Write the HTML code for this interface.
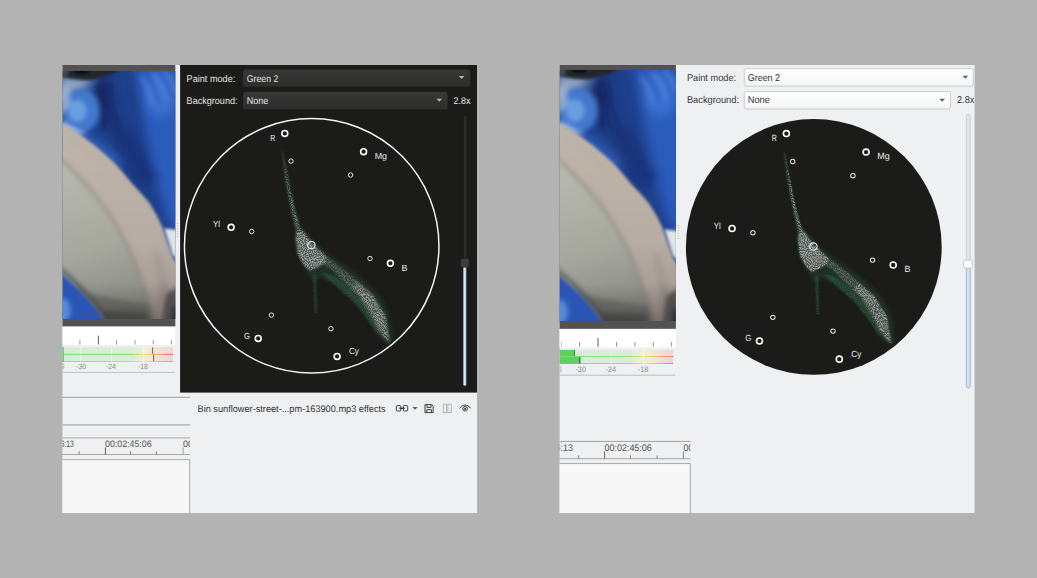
<!DOCTYPE html>
<html lang="en">
<head>
<meta charset="utf-8">
<title>Vectorscope comparison</title>
<style>
html,body{margin:0;padding:0;background:#b3b3b3;}
body{width:1037px;height:578px;overflow:hidden;}
svg{display:block;}
text{font-family:"Liberation Sans","DejaVu Sans",sans-serif;text-rendering:geometricPrecision;}
</style>
</head>
<body>
<svg width="1037" height="578" viewBox="0 0 1037 578">
<defs>
  <filter id="vblur" x="-10%" y="-10%" width="120%" height="120%"><feGaussianBlur stdDeviation="1.6"/></filter>
  <filter id="vblur3" x="-20%" y="-20%" width="140%" height="140%"><feGaussianBlur stdDeviation="2.4"/></filter>
  <filter id="vblur2" x="-40%" y="-40%" width="180%" height="180%"><feGaussianBlur stdDeviation="5"/></filter>
  <filter id="tblur" x="-20%" y="-20%" width="140%" height="140%"><feGaussianBlur stdDeviation="0.9"/></filter>
  <filter id="tblur2" x="-20%" y="-20%" width="140%" height="140%"><feGaussianBlur stdDeviation="2"/></filter>
  <filter id="tblur4" x="-20%" y="-20%" width="140%" height="140%"><feGaussianBlur stdDeviation="0.55"/></filter>
  <filter id="speck" x="-20%" y="-20%" width="140%" height="140%" color-interpolation-filters="sRGB">
    <feGaussianBlur in="SourceGraphic" stdDeviation="0.8" result="b"/>
    <feTurbulence type="fractalNoise" baseFrequency="0.95" numOctaves="1" seed="7" result="n"/>
    <feColorMatrix in="n" type="matrix" values="0 0 0 0 1  0 0 0 0 1  0 0 0 0 1  5 0 0 0 -2.05" result="m"/>
    <feComposite in="b" in2="m" operator="in"/>
  </filter>
  <filter id="soft" x="-5%" y="-5%" width="110%" height="110%"><feGaussianBlur stdDeviation="0.35"/></filter>

  <linearGradient id="gGlove" x1="0" y1="0" x2="1" y2="1">
    <stop offset="0" stop-color="#3d74cf"/>
    <stop offset="0.45" stop-color="#2a57b6"/>
    <stop offset="1" stop-color="#1f47a6"/>
  </linearGradient>
  <linearGradient id="gRim" x1="0" y1="0" x2="1" y2="0">
    <stop offset="0" stop-color="#a7a79b"/>
    <stop offset="0.45" stop-color="#b1ada3"/>
    <stop offset="1" stop-color="#bdb5ad"/>
  </linearGradient>
  <radialGradient id="gFinger" cx="0.45" cy="0.5" r="0.6">
    <stop offset="0" stop-color="#6ea4ea"/>
    <stop offset="0.5" stop-color="#4a82d8"/>
    <stop offset="1" stop-color="#346ac8"/>
  </radialGradient>
  <linearGradient id="gMeter" x1="0" y1="0" x2="1" y2="0">
    <stop offset="0" stop-color="#5fd35f"/>
    <stop offset="0.62" stop-color="#6fdc5f"/>
    <stop offset="0.74" stop-color="#f0ea50"/>
    <stop offset="0.84" stop-color="#f5b04a"/>
    <stop offset="1" stop-color="#f04848"/>
  </linearGradient>
  <linearGradient id="gShade" x1="0" y1="0" x2="0" y2="1"><stop offset="0" stop-color="#000" stop-opacity="0"/><stop offset="1" stop-color="#000" stop-opacity="0.28"/></linearGradient>
  <linearGradient id="gInner" gradientUnits="userSpaceOnUse" x1="0" y1="90" x2="50" y2="254"><stop offset="0" stop-color="#b9bbaf"/><stop offset="0.55" stop-color="#a6a89e"/><stop offset="1" stop-color="#85877f"/></linearGradient>
  <linearGradient id="gRim2" gradientUnits="userSpaceOnUse" x1="0" y1="50" x2="0" y2="254"><stop offset="0" stop-color="#bfb5a9"/><stop offset="0.6" stop-color="#b7aca4"/><stop offset="1" stop-color="#9c938d"/></linearGradient>
  <linearGradient id="gComboD" x1="0" y1="0" x2="0" y2="1"><stop offset="0" stop-color="#373736"/><stop offset="1" stop-color="#2d2d2c"/></linearGradient>
  <linearGradient id="gComboL" x1="0" y1="0" x2="0" y2="1"><stop offset="0" stop-color="#ffffff"/><stop offset="1" stop-color="#f4f5f6"/></linearGradient>
  <linearGradient id="gSlideL" x1="0" y1="0" x2="0" y2="1">
    <stop offset="0" stop-color="#9ab4cc"/>
    <stop offset="1" stop-color="#d6e6f6"/>
  </linearGradient>

  <clipPath id="clipShotL"><rect x="62.5" y="65" width="414.5" height="448"/></clipPath>
  <clipPath id="clipShotR"><rect x="559.6" y="65" width="415" height="448"/></clipPath>
  <clipPath id="clipL"><rect x="62.5" y="420" width="127.5" height="60"/></clipPath>
  <clipPath id="clipR"><rect x="559.6" y="420" width="130.9" height="60"/></clipPath>
  <pattern id="hatch" width="2" height="2" patternUnits="userSpaceOnUse">
    <rect width="2" height="2" fill="#5a5f5c"/>
    <rect width="1" height="1" fill="#e8e8e8"/>
    <rect x="1" y="1" width="1" height="1" fill="#cfcfcf"/>
  </pattern>

  <!-- video frame: local coords 0..113 x 0..249 -->
  <symbol id="video" viewBox="0 0 113 249" preserveAspectRatio="none">
    <rect x="0" y="0" width="113" height="249" fill="#1e408c"/>
    <g filter="url(#vblur2)">
      <path d="M72 -6 L120 -6 L120 170 L106 150 L94 110 L84 64 Z" fill="#2b5cbc"/>
      <ellipse cx="98" cy="24" rx="16" ry="22" fill="#3f76d4" opacity="0.8"/>
      <path d="M60 62 C66 76 72 86 79 98 C82 104 85 109 88 114" stroke="#19327a" stroke-width="23" fill="none" opacity="0.88"/>
      <path d="M44 6 C44 30 48 46 58 64" stroke="#172e70" stroke-width="13" fill="none" opacity="0.9"/>
      <ellipse cx="40" cy="24" rx="9" ry="17" fill="#152a68"/>
      <path d="M6 60 C24 66 40 78 56 96" stroke="#3566c4" stroke-width="9" fill="none" opacity="0.9"/>
      <path d="M-4 4 L30 6 L24 18 L10 24 L-4 40 Z" fill="#8fa4be"/>
    </g>
    <g filter="url(#vblur3)">
      <ellipse cx="18" cy="40" rx="19" ry="22" fill="#4278cc"/>
      <ellipse cx="15" cy="40" rx="9" ry="11" fill="#6a9ee2"/>
      <path d="M-2 20 L6 12 L8 34 L-2 44 Z" fill="#9fb6d4" opacity="0.8"/>
      <path d="M39 14 C38 30 39 44 43 58" stroke="#14265e" stroke-width="6" fill="none" opacity="0.85"/>
      <path d="M78 6 C84 12 88 22 90 34 M90 2 C98 10 102 20 104 30 M102 0 C108 6 112 14 114 22" stroke="#5a90e6" stroke-width="3" opacity="0.6" fill="none"/>
      <path d="M84 4 C90 12 94 22 96 32 M96 0 C103 8 107 16 109 26" stroke="#2450b2" stroke-width="2.5" opacity="0.6" fill="none"/>
      <path d="M-2 50 L8 55 L24 64 L12 64 L-2 58 Z" fill="#9cc0ee" opacity="0.9"/>
    </g>
    <g filter="url(#vblur)">
      <!-- whole dish -->
      <path d="M-4 50.5 L7 57 L20 65.5 L33 75.4 L43 84 L52.3 92.6 L61 102.5 L69.6 113 L79 123 L86.9 132.4 L94 144 L99.9 156.2 L104.2 169 L110 186 L117 196 L117 254 L-4 254 Z" fill="url(#gRim2)"/>
    </g>
    <g filter="url(#vblur3)">
      <!-- inner surface -->
      <path d="M-4 86 C8 96 18 108 26 116 C37 128 50 146 62 169 C72 186 82 214 93 254 L-4 254 Z" fill="url(#gInner)"/>
      <path d="M-4 87 C8 97 18 109 26 117 C37 129 50 147 62 170 C72 187 82 215 92 254" stroke="#8a827d" stroke-width="2.5" fill="none" opacity="0.8"/>
      <path d="M10 210 L30 224 L60 230 L86 234 L90 254 L30 254 Z" fill="#6c6d69" opacity="0.75"/>
      <path d="M42 240 L84 242 L88 256 L40 256 Z" fill="#575755" opacity="0.85"/>
      <path d="M-4 198 C10 208 28 226 46 252" stroke="#4a4e55" stroke-width="5" fill="none" opacity="0.75"/>
      <g filter="url(#vblur3)"><path d="M94 186 C101 208 106 235 108 254" stroke="#8d8681" stroke-width="8" stroke-linecap="round" fill="none" opacity="0.4"/>
      <path d="M101 218 C104 230 107 242 108 254" stroke="#857e79" stroke-width="8" stroke-linecap="round" fill="none" opacity="0.45"/></g>
      <path d="M6 66 C26 78 50 100 68 124" stroke="#b9b0a6" stroke-width="6" fill="none" opacity="0.8"/>
    </g>
    <g filter="url(#vblur)">
      <path d="M102 158 L116 160 L116 190 L110 184 Z" fill="#dfe4e4"/>
      <path d="M-4 202 C10 212 28 230 44 254 L-4 254 Z" fill="#2a55b4"/>
    </g>
    <g filter="url(#vblur3)">
      <path d="M18 212 L116 212 L116 254 L46 254 Z" fill="url(#gShade)"/>
      <path d="M104 224 L116 216 L116 254 L99 254 Z" fill="#4d4a48" opacity="0.95"/>
      <path d="M111 238 L116 234 L116 254 L109 254 Z" fill="#141c3a" opacity="0.9"/>
      <ellipse cx="1" cy="240" rx="7" ry="12" fill="#5a8edc" opacity="0.95"/>
    </g>
    <g filter="url(#vblur)">
      <path d="M-4 -4 L61 -4 C55 2 47 4.5 40 6 C33 8.5 27 9.5 20 9 C12 8.5 4 6.5 -4 5.5 Z" fill="#20262a"/>
      <path d="M-4 -2 L6 -2 L5 5 L-4 5 Z" fill="#4a5662" opacity="0.8"/>
      <ellipse cx="19" cy="0.5" rx="8" ry="2.5" fill="#050607"/>
    </g>
  </symbol>

  <!-- vectorscope trace in scope-local coords: centre (0,0), radius 127.6 -->
  <g id="trace">
    <g filter="url(#tblur2)" opacity="0.22">
      <path d="M-17 -12 L-8 -15 L4 -3 L18 10 L38 23 L56 38 L70 53 L79 72 L82 96 L77 100 L66 90 L58 76 L44 56 L24 40 L10 32 L0 36 L-8 22 L-15 6 Z" fill="#2b6846"/>
    </g>
    <g filter="url(#tblur)">
      <path d="M-29.8 -94 L-28.6 -94 L-21 -52 L-13 -20 L-6 -12 L-15 -10 L-20 -32 L-26 -62 Z" fill="#2f4a3b" opacity="0.6"/>
      <path d="M1.5 30 L4.5 30 L5.5 68 L3 68 Z" fill="#2c6443" opacity="0.3"/>
      <path d="M8 27 L22 31 L40 45 L54 62 L62 78 L69 91 L64 87 L54 72 L40 55 L22 39 Z" fill="#2f6b48" opacity="0.3"/>
      <path d="M14 11 L32.2 25 L45.7 36 L61.4 49.8 L73.8 70 L76 83.5 L78.5 98 L74 96 L64.8 83.5 L58 70 L45.7 49.8 L31 36 L21 25 L10 18 Z" fill="#4c5550" opacity="0.45"/>
      <path d="M46 37 L61 50.5 L73 70 L75.5 83.5 L77.5 95 L74 93 L66.5 83.5 L60.5 70 L49 52 L40 43 Z" fill="#5a605c" opacity="0.5"/>
      <path d="M-16 -7 L-15 -13 L-8.5 -13.5 L-3 -6 L1.5 -0.5 L8 5.5 L14.5 11.5 L13 18 L6 22.5 L-2 25.5 L-8.2 19.6 L-13.8 9.3 Z" fill="#555a57" opacity="0.85"/>
    </g>
    <g filter="url(#speck)">
      <path d="M-29.8 -94 L-28.6 -94 L-21 -52 L-13 -20 L-6 -12 L-15 -10 L-20 -32 L-26 -62 Z" fill="#587f69" opacity="0.45"/>
      <path d="M-27 -78 L-26 -78 L-17 -36 L-10 -14 L-14 -13 L-21 -40 Z" fill="#d0d6d2" opacity="0.45"/>
      <path d="M1.5 30 L4.5 30 L5.5 68 L3 68 Z" fill="#37704f" opacity="0.4"/>
      <path d="M8 27 L22 31 L40 45 L54 62 L62 78 L69 91 L64 87 L54 72 L40 55 L22 39 Z" fill="#37704f" opacity="0.33"/>
      <path d="M-17 -12 L-8 -15 L4 -3 L18 10 L38 23 L56 38 L70 53 L79 72 L82 96 L77 100 L66 90 L58 76 L44 56 L24 40 L10 32 L0 36 L-8 22 L-15 6 Z" fill="#2f6446" opacity="0.13"/>
      <path d="M14 11 L32.2 25 L45.7 36 L61.4 49.8 L73.8 70 L76 83.5 L78.5 98 L74 96 L64.8 83.5 L58 70 L45.7 49.8 L31 36 L21 25 L10 18 Z" fill="#d4d8d5" opacity="0.24"/>
      <path d="M46 37 L61 50.5 L73 70 L75.5 83.5 L77.5 95 L74 93 L66.5 83.5 L60.5 70 L49 52 L40 43 Z" fill="#e6e6e6" opacity="0.36"/>
      <path d="M-16 -7 L-15 -13 L-8.5 -13.5 L-3 -6 L1.5 -0.5 L8 5.5 L14.5 11.5 L13 18 L6 22.5 L-2 25.5 L-8.2 19.6 L-13.8 9.3 Z" fill="#ececec" opacity="0.52"/>
    </g>
    <circle cx="-0.3" cy="0.2" r="3.7" fill="none" stroke="#f2f2f2" stroke-width="1.05"/>
  </g>

  <!-- scope markers, local coords relative to centre -->
  <g id="marks" fill="none">
    <g stroke="#ffffff" stroke-width="1.6">
      <circle cx="-26.9" cy="-111.5" r="2.95"/>
      <circle cx="-80.6" cy="-17.6" r="2.95"/>
      <circle cx="51.9" cy="-93.2" r="2.95"/>
      <circle cx="78.7" cy="18.4" r="2.95"/>
      <circle cx="-53.5" cy="93.5" r="2.95"/>
      <circle cx="25.4" cy="111.5" r="2.95"/>
    </g>
    <g stroke="#e6e6e6" stroke-width="1">
      <circle cx="-20.7" cy="-83.8" r="2.2"/>
      <circle cx="-60" cy="-13.4" r="2.2"/>
      <circle cx="38.9" cy="-69.9" r="2.2"/>
      <circle cx="58.3" cy="13.6" r="2.2"/>
      <circle cx="-40.3" cy="70.2" r="2.2"/>
      <circle cx="19.2" cy="83.8" r="2.2"/>
    </g>
    <g fill="#ececec" stroke="none" font-size="8.9">
      <text x="-41.4" y="-104.3" textLength="5" lengthAdjust="spacingAndGlyphs">R</text>
      <text x="-98.6" y="-17.6" textLength="6.9" lengthAdjust="spacingAndGlyphs">Yl</text>
      <text x="63" y="-85.9">Mg</text>
      <text x="89.8" y="25.8">B</text>
      <text x="-67.7" y="93.9" textLength="6" lengthAdjust="spacingAndGlyphs">G</text>
      <text x="37.2" y="109.2" textLength="10" lengthAdjust="spacingAndGlyphs">Cy</text>
    </g>
  </g>
</defs>

<rect x="0" y="0" width="1037" height="578" fill="#b3b3b3"/>

<!-- ================= LEFT SCREENSHOT ================= -->
<g id="left" clip-path="url(#clipShotL)">
  <rect x="50" y="50" width="440" height="480" fill="#eff0f1"/>
  <!-- monitor -->
  <rect x="50" y="50" width="125.3" height="276.6" fill="#525252"/>
  <use href="#video" x="62.5" y="71" width="112.8" height="248"/>
  <g fill="#b4b6b8"><rect x="177.2" y="223.0" width="0.9" height="1"/><rect x="177.2" y="225.6" width="0.9" height="1"/><rect x="177.2" y="228.2" width="0.9" height="1"/><rect x="177.2" y="230.8" width="0.9" height="1"/><rect x="177.2" y="233.4" width="0.9" height="1"/><rect x="177.2" y="236.0" width="0.9" height="1"/></g>
  <!-- ruler + meter -->
  <rect x="52.5" y="326.6" width="122.8" height="18.2" fill="#ffffff"/>
  <g stroke="#8a8a8a" stroke-width="0.9">
    <line x1="79.9" y1="340.2" x2="79.9" y2="344.4"/>
    <line x1="98.4" y1="335.6" x2="98.4" y2="344.4" stroke="#555"/>
    <line x1="116.5" y1="340.2" x2="116.5" y2="344.4"/>
    <line x1="135" y1="340.2" x2="135" y2="344.4"/>
    <line x1="153.2" y1="340.2" x2="153.2" y2="344.4"/>
    <line x1="171.4" y1="340.2" x2="171.4" y2="344.4"/>
  </g>
  <rect x="62.5" y="347.2" width="110.4" height="14.7" fill="url(#gMeter)" opacity="0.17"/>
  <rect x="62.5" y="353.9" width="110.4" height="0.9" fill="url(#gMeter)" opacity="0.95"/>
  <rect x="62.5" y="361.2" width="110.4" height="0.8" fill="url(#gMeter)" opacity="0.7"/>
  <rect x="52.5" y="347.2" width="11.3" height="14.7" fill="#55cc55"/>
  <g stroke="#ffffff" stroke-width="0.6" opacity="0.7">
    <line x1="80.8" y1="347.2" x2="80.8" y2="361.9"/>
    <line x1="111.5" y1="347.2" x2="111.5" y2="361.9"/>
    <line x1="143.5" y1="347.2" x2="143.5" y2="361.9"/>
  </g>
  <rect x="152.2" y="347.4" width="0.9" height="6.4" fill="#555"/>
  <rect x="153.2" y="354.8" width="0.9" height="6.4" fill="#555"/>
  <g font-size="7.6" fill="#8c8c8c">
    <text x="60.2" y="369.3">6</text>
    <text x="76.3" y="369.3" textLength="9.8" lengthAdjust="spacingAndGlyphs">-30</text>
    <text x="105.9" y="369.3" textLength="10.1" lengthAdjust="spacingAndGlyphs">-24</text>
    <text x="137.9" y="369.3" textLength="10.1" lengthAdjust="spacingAndGlyphs">-18</text>
  </g>
  <rect x="52.5" y="371.9" width="122.3" height="0.9" fill="#bcbcbc"/>
  <!-- splitter lines -->
  <rect x="52.5" y="396.8" width="137.5" height="1" fill="#9c9c9c"/>
  <rect x="52.5" y="424.4" width="137.5" height="1" fill="#9c9c9c"/>
  <rect x="52.5" y="437.2" width="137.5" height="1.4" fill="#bdbdbd"/>
  <!-- timeline ruler -->
  <g font-size="9.3" fill="#505050">
    <text x="60.5" y="446.7" textLength="13.4" lengthAdjust="spacingAndGlyphs">6:13</text>
    <text x="105.1" y="446.7" textLength="46.5" lengthAdjust="spacingAndGlyphs">00:02:45:06</text>
    <text x="183.1" y="446.7" textLength="46.5" lengthAdjust="spacingAndGlyphs" clip-path="url(#clipL)">00:02:56:00</text>
  </g>
  <rect x="52.5" y="454" width="137.5" height="1" fill="#a6a6a6"/>
  <g stroke="#7a7a7a" stroke-width="0.9">
    <line x1="79.1" y1="451.2" x2="79.1" y2="454.5"/>
    <line x1="105.4" y1="447.4" x2="105.4" y2="454.5" stroke="#555"/>
    <line x1="130.6" y1="451.2" x2="130.6" y2="454.5"/>
    <line x1="156.4" y1="451.2" x2="156.4" y2="454.5"/>
    <line x1="183.1" y1="447.4" x2="183.1" y2="454.5" stroke="#999"/>
  </g>
  <rect x="61.5" y="459.7" width="128.2" height="60" fill="#f7f7f7" stroke="#a2a2a2" stroke-width="0.9"/>
  <!-- effect stack header -->
  <text x="197.5" y="411.8" font-size="9.6" fill="#2e3436" textLength="188.2" lengthAdjust="spacingAndGlyphs">Bin sunflower-street-...pm-163900.mp3 effects</text>

  <!-- dark scope panel -->
  <rect x="180.1" y="50" width="310" height="342.6" fill="#1b1b19"/>
  <g font-size="9.8" fill="#e6e4e1">
    <text x="186.6" y="81.7" textLength="48.7" lengthAdjust="spacingAndGlyphs">Paint mode:</text>
    <text x="186.6" y="103.9" textLength="50.9" lengthAdjust="spacingAndGlyphs">Background:</text>
  </g>
  <rect x="243.6" y="69.9" width="226.3" height="16.2" rx="1.8" fill="url(#gComboD)" stroke="#3b3b3b" stroke-width="0.7"/>
  <rect x="243.6" y="92.3" width="203.4" height="16.5" rx="1.8" fill="url(#gComboD)" stroke="#3b3b3b" stroke-width="0.7"/>
  <g font-size="9.8" fill="#e6e4e1">
    <text x="246.8" y="81.7" textLength="31.6" lengthAdjust="spacingAndGlyphs">Green 2</text>
    <text x="246.8" y="103.9" textLength="21.4" lengthAdjust="spacingAndGlyphs">None</text>
    <text x="453.6" y="103.9" textLength="16.8" lengthAdjust="spacingAndGlyphs">2.8x</text>
  </g>
  <path d="M458.8 76 L464.4 76 L461.6 79 Z" fill="#b8b4b0"/>
  <path d="M436.5 98.7 L442.1 98.7 L439.3 101.7 Z" fill="#b8b4b0"/>
  <!-- slider -->
  <rect x="463.8" y="115.4" width="2.6" height="270" rx="1.2" fill="#2b2b2a"/>
  <rect x="463.1" y="266" width="3.3" height="119.5" rx="1.2" fill="#86a9cb"/>
  <rect x="463.9" y="266" width="1.7" height="119.5" fill="#ddebf8"/>
  <rect x="460.9" y="258.7" width="8.1" height="8.5" rx="1.7" fill="#3e3e3d" stroke="#2c2c2b" stroke-width="0.7"/>
  <!-- scope -->
  <g transform="translate(311.7 244.9)">
    <use href="#trace"/>
    <circle cx="0" cy="0.9" r="127.25" fill="none" stroke="#f4f4f4" stroke-width="1.5"/>
    <use href="#marks"/>
  </g>
  <!-- toolbar icons -->
  <g fill="none" stroke="#3a3f42" stroke-width="1">
    <rect x="396.4" y="405.6" width="4.4" height="5.4" rx="0.8"/>
    <rect x="403.3" y="405.6" width="4.4" height="5.4" rx="0.8"/>
    <line x1="399.4" y1="408.3" x2="404.7" y2="408.3" stroke-width="1.4"/>
  </g>
  <path d="M412.4 407 L417.6 407 L415 409.8 Z" fill="#5a5f62"/>
  <g fill="none" stroke="#3a3f42" stroke-width="1">
    <path d="M425 404.6 L431.6 404.6 L433.2 406.2 L433.2 412.6 L425 412.6 Z"/>
    <path d="M427 404.6 L427 407.4 L431 407.4 L431 404.6"/>
    <path d="M426.8 412.6 L426.8 409.6 L431.4 409.6 L431.4 412.6"/>
  </g>
  <g fill="none" stroke="#aeb1b4" stroke-width="0.9">
    <rect x="443.3" y="404.2" width="3.3" height="8.4"/>
    <rect x="447.9" y="404.2" width="3.3" height="8.4"/>
  </g>
  <g fill="none" stroke="#3a3f42" stroke-width="1">
    <path d="M459.6 408.4 C462 404 468 404 470.6 408.4"/>
    <circle cx="465.1" cy="408.8" r="2.3"/>
  </g>
  <circle cx="465.1" cy="408.8" r="1.1" fill="#3a3f42"/>
</g>

<!-- ================= RIGHT SCREENSHOT ================= -->
<g id="right" clip-path="url(#clipShotR)">
  <rect x="545" y="50" width="445" height="480" fill="#eff0f1"/>
  <rect x="545" y="50" width="130.9" height="278.9" fill="#525252"/>
  <use href="#video" x="559.6" y="70" width="116.3" height="251"/>
  <rect x="549.6" y="328.9" width="126.3" height="18.5" fill="#ffffff"/>
  <g stroke="#8a8a8a" stroke-width="0.9">
    <line x1="561.4" y1="342" x2="561.4" y2="346.7" stroke="#bbb"/>
    <line x1="579.5" y1="342" x2="579.5" y2="346.7"/>
    <line x1="598" y1="338" x2="598" y2="346.7" stroke="#777" stroke-width="1.2"/>
    <line x1="616.5" y1="342" x2="616.5" y2="346.7"/>
    <line x1="634.9" y1="342" x2="634.9" y2="346.7"/>
    <line x1="653.3" y1="342" x2="653.3" y2="346.7"/>
    <line x1="671.6" y1="342" x2="671.6" y2="346.7"/>
  </g>
  <rect x="559.6" y="349.9" width="113.5" height="13.8" fill="url(#gMeter)" opacity="0.17"/>
  <rect x="559.6" y="356.1" width="113.5" height="0.8" fill="url(#gMeter)" opacity="0.85"/>
  <rect x="559.6" y="363" width="113.5" height="0.8" fill="url(#gMeter)" opacity="0.85"/>
  <g stroke="#ffffff" stroke-width="0.6" opacity="0.7">
    <line x1="611" y1="349.9" x2="611" y2="363.7"/>
    <line x1="643.4" y1="349.9" x2="643.4" y2="363.7"/>
  </g>
  <rect x="549.6" y="349.9" width="24.8" height="6.2" fill="#5dd15d"/>
  <rect x="549.6" y="356.9" width="30.2" height="6.8" fill="#5dd15d"/>
  <rect x="574" y="349.9" width="0.9" height="6.2" fill="#4a6a4a"/>
  <rect x="579.3" y="356.9" width="1.1" height="6.8" fill="#3a4a3a"/>
  <g font-size="7.9" fill="#8c8c8c">
    <text x="557.6" y="372" >6</text>
    <text x="575.4" y="372" textLength="10.6" lengthAdjust="spacingAndGlyphs">-30</text>
    <text x="605.5" y="372" textLength="10.5" lengthAdjust="spacingAndGlyphs">-24</text>
    <text x="637.8" y="372" textLength="10.4" lengthAdjust="spacingAndGlyphs">-18</text>
  </g>
  <rect x="549.6" y="374.7" width="125.6" height="1" fill="#bcbcbc"/>
  <!-- timeline -->
  <rect x="549.6" y="440.9" width="140.9" height="1" fill="#a2a2a2"/>
  <g font-size="9.5" fill="#505050">
    <text x="555.6" y="450.8" textLength="17.4" lengthAdjust="spacingAndGlyphs">5:13</text>
    <text x="604.6" y="450.8" textLength="47.1" lengthAdjust="spacingAndGlyphs">00:02:45:06</text>
    <text x="683.4" y="450.8" textLength="47.1" lengthAdjust="spacingAndGlyphs" clip-path="url(#clipR)">00:02:56:00</text>
  </g>
  <rect x="549.6" y="458.2" width="140.9" height="1" fill="#a6a6a6"/>
  <g stroke="#7a7a7a" stroke-width="0.9">
    <line x1="578.6" y1="455.4" x2="578.6" y2="458.7"/>
    <line x1="604.6" y1="451.3" x2="604.6" y2="458.7" stroke="#555"/>
    <line x1="630.5" y1="455.4" x2="630.5" y2="458.7"/>
    <line x1="657.1" y1="455.4" x2="657.1" y2="458.7"/>
    <line x1="683.4" y1="451.3" x2="683.4" y2="458.7" stroke="#777"/>
  </g>
  <rect x="558.6" y="463.6" width="131.7" height="60" fill="#f7f7f7" stroke="#a2a2a2" stroke-width="0.9"/>

  <g fill="#b4b6b8"><rect x="677.9" y="225.0" width="0.9" height="1"/><rect x="677.9" y="227.6" width="0.9" height="1"/><rect x="677.9" y="230.2" width="0.9" height="1"/><rect x="677.9" y="232.8" width="0.9" height="1"/><rect x="677.9" y="235.4" width="0.9" height="1"/><rect x="677.9" y="238.0" width="0.9" height="1"/></g>
  <!-- controls -->
  <g font-size="9.9" fill="#33383b">
    <text x="686.9" y="80.9" textLength="49.2" lengthAdjust="spacingAndGlyphs">Paint mode:</text>
    <text x="686.9" y="103.4" textLength="52.1" lengthAdjust="spacingAndGlyphs">Background:</text>
  </g>
  <rect x="744.3" y="68.6" width="229" height="17.5" rx="1.8" fill="url(#gComboL)" stroke="#bfc1c3" stroke-width="0.8"/>
  <rect x="744.3" y="91.7" width="206.2" height="17.3" rx="1.8" fill="url(#gComboL)" stroke="#bfc1c3" stroke-width="0.8"/>
  <g font-size="9.9" fill="#33383b">
    <text x="747.7" y="80.9" textLength="32.4" lengthAdjust="spacingAndGlyphs">Green 2</text>
    <text x="747.7" y="103.4" textLength="22.2" lengthAdjust="spacingAndGlyphs">None</text>
    <text x="957" y="103.4" textLength="17.4" lengthAdjust="spacingAndGlyphs">2.8x</text>
  </g>
  <path d="M962.6 75.7 L968.2 75.7 L965.4 78.7 Z" fill="#5a5f62"/>
  <path d="M939.4 98.7 L945 98.7 L942.2 101.7 Z" fill="#5a5f62"/>
  <!-- slider -->
  <rect x="966.4" y="114.3" width="3.8" height="273.6" rx="1.8" fill="#e5e6e7" stroke="#c2c4c6" stroke-width="0.8"/>
  <rect x="966.4" y="267" width="3.8" height="120.9" rx="1.8" fill="#cfe1f2" stroke="#9fbcd8" stroke-width="0.8"/>
  <rect x="963.5" y="260.1" width="9" height="8" rx="2" fill="#fdfdfd" stroke="#bcbec0" stroke-width="0.8"/>
  <!-- scope -->
  <circle cx="813.8" cy="246.97" r="127.9" fill="#1b1b19"/>
  <g transform="translate(813.7 246.35) scale(0.995)">
    <use href="#trace"/>
  </g>
  <g transform="translate(813.6 246.35) scale(1.0115)">
    <use href="#marks"/>
  </g>
</g>
</svg>
</body>
</html>
